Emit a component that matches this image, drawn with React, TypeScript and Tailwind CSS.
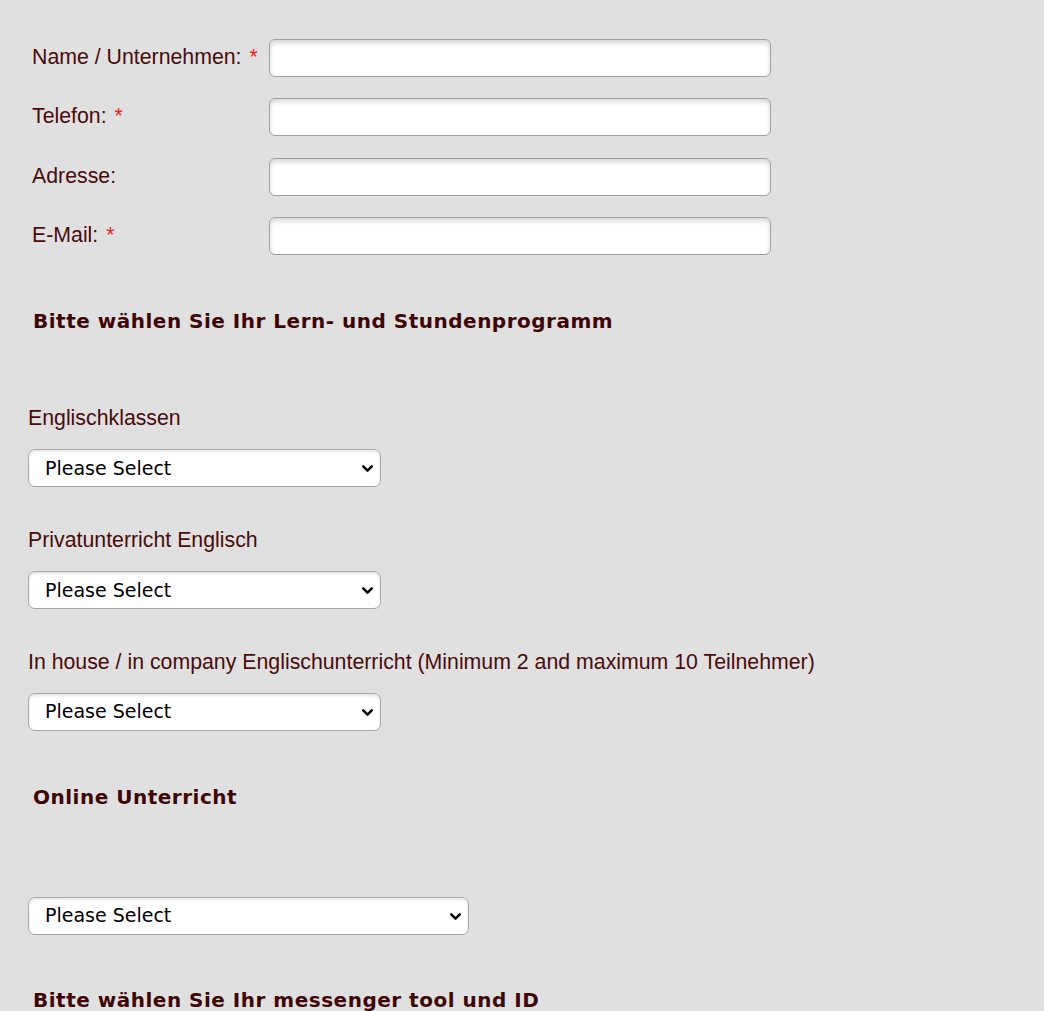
import { ChevronDown } from 'lucide-react'

const label = 'font-["Liberation_Sans",Arial,sans-serif] text-[21.3px] text-[#4a0b0b]'
const heading = 'font-["DejaVu_Sans",Verdana,sans-serif] text-[20px] font-bold tracking-[0.5px] text-[#3f0505]'

function Field({ name, required }: { name: string; required?: boolean }) {
  return (
    <div className="flex h-[38px] items-center">
      <div className={`w-[237px] ${label}`}>
        {name}
        {required && <span className="ml-[8px] text-[#f01d1d]">*</span>}
      </div>
      <input
        type="text"
        className="h-[38px] w-[502px] rounded-[6px] border border-[#a0a0a0] bg-white shadow-[inset_0_3px_5px_rgba(0,0,0,0.16)] outline-none"
      />
    </div>
  )
}

function Select({ wide }: { wide?: boolean }) {
  return (
    <div className={`relative h-[38px] ${wide ? 'w-[441px]' : 'w-[353px]'}`}>
      <select className='h-full w-full appearance-none rounded-[7px] border border-[#a8a8a8] bg-white pl-[16px] font-["DejaVu_Sans",Verdana,sans-serif] text-[19px] text-black shadow-[inset_0_2px_3px_rgba(0,0,0,0.1)] outline-none'>
        <option>Please Select</option>
      </select>
      <ChevronDown
        className="pointer-events-none absolute right-[5px] top-[11px] h-[17px] w-[17px] text-black"
        strokeWidth={3.5}
      />
    </div>
  )
}

export default function App() {
  return (
    <div className="min-h-screen bg-[#e0e0e0] pt-[39px]">
      <div className="flex flex-col gap-[21.3px] pl-[32px]">
        <Field name="Name / Unternehmen:" required />
        <Field name="Telefon:" required />
        <Field name="Adresse:" />
        <Field name="E-Mail:" required />
      </div>

      <h2 className={`mt-[51px] pl-[33px] ${heading}`}>Bitte wählen Sie Ihr Lern- und Stundenprogramm</h2>

      <div className="mt-[67px] flex flex-col pl-[28px]">
        <div className={label}>Englischklassen</div>
        <div className="mt-[14px]">
          <Select />
        </div>
        <div className={`mt-[38px] ${label}`}>Privatunterricht Englisch</div>
        <div className="mt-[14px]">
          <Select />
        </div>
        <div className={`mt-[38px] ${label}`}>
          In house / in company Englischunterricht (Minimum 2 and maximum 10 Teilnehmer)
        </div>
        <div className="mt-[14px]">
          <Select />
        </div>
      </div>

      <h2 className={`mt-[51px] pl-[33px] ${heading}`}>Online Unterricht</h2>

      <div className="mt-[85px] pl-[28px]">
        <Select wide />
      </div>

      <h2 className={`mt-[50px] pl-[33px] ${heading}`}>Bitte wählen Sie Ihr messenger tool und ID</h2>
    </div>
  )
}
